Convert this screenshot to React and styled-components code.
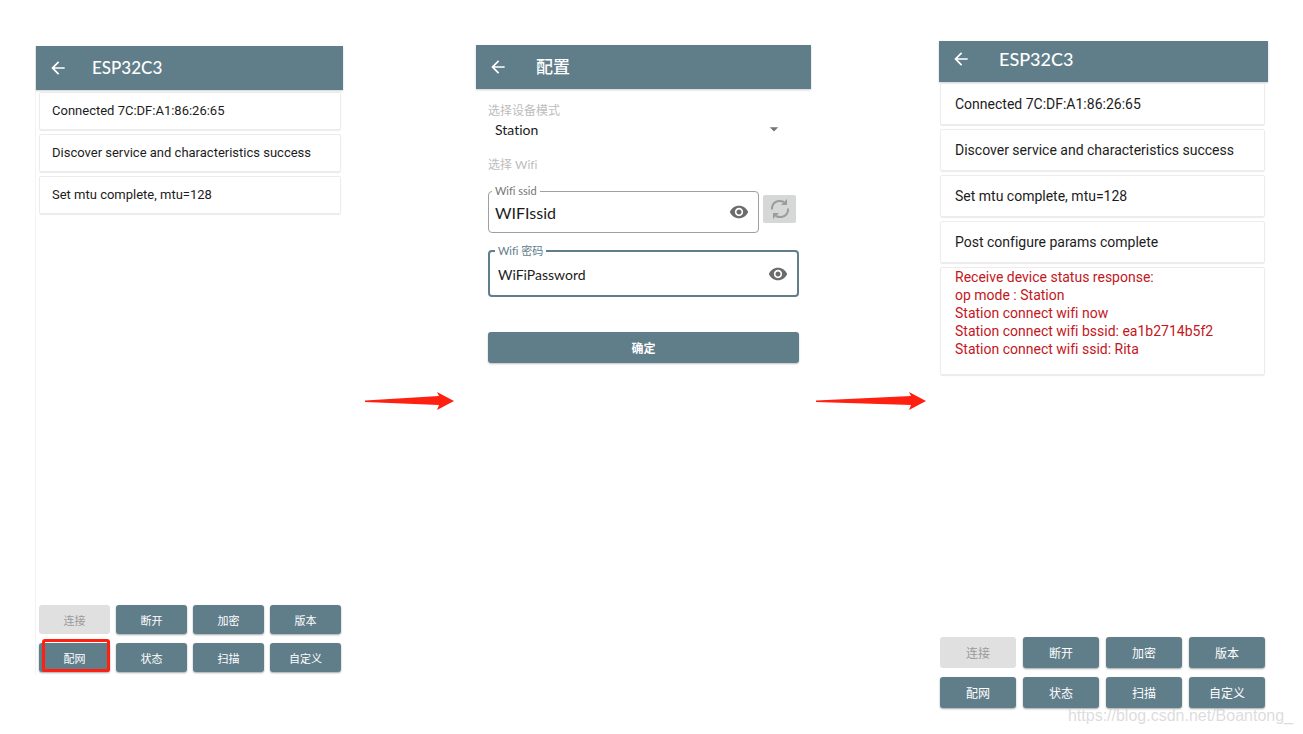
import React from "react";
import styled, { createGlobalStyle, css } from "styled-components";
import { MdArrowBack, MdArrowDropDown, MdVisibility } from "react-icons/md";

const slate = "#607d8a";
const red = "#ff2012";

const GlobalStyle = createGlobalStyle`
  * {
    box-sizing: border-box;
  }
  body {
    margin: 0;
    background: #fff;
    color: #1c1c1c;
    font-family: Lato, "Noto Sans CJK SC", sans-serif;
    font-variant-ligatures: none;
  }
  button, input, select {
    font-family: inherit;
    font-variant-ligatures: none;
    margin: 0;
  }
`;

const Page = styled.main`
  position: relative;
  min-height: 100vh;
  padding: 41px 35px 22px 36px;
  display: grid;
  grid-template-columns: 307fr 133fr 335fr 128fr 329fr;
`;

const Phone = styled.section`
  display: flex;
  flex-direction: column;
  min-width: 0;

  ${({ $size }) =>
    $size === "small" &&
    css`
      margin: 5px 0 37px;
      box-shadow: -1px 0 0 #f3f3f3;
    `}
  ${({ $size }) =>
    $size === "medium" &&
    css`
      margin-top: 4px;
    `}
`;

const AppBar = styled.header`
  display: flex;
  align-items: center;
  gap: ${({ $wide }) => ($wide ? "28px" : "24px")};
  height: ${({ $tall }) => ($tall ? "44px" : "41px")};
  padding: 0 12px ${({ $tall }) => ($tall ? "0" : "6px")};
  background: ${slate};
  color: #fff;
  box-shadow: 0 1px 2px rgba(0, 0, 0, 0.2);

  h1 {
    margin: 0;
    font-size: ${({ $tall }) => ($tall ? "17px" : "18px")};
    font-weight: 500;
    line-height: 24px;
  }
`;

const BackButton = styled.button`
  display: flex;
  padding: 0;
  border: 0;
  background: none;
  color: inherit;
  font-size: 20px;
`;

const Log = styled.ul`
  flex: 1;
  display: flex;
  flex-direction: column;
  gap: 4px;
  margin: 0;
  padding: ${({ $large }) => ($large ? "1px 3px 0 1px" : "2px 2px 0 3px")};
  list-style: none;
  font-family: Roboto, sans-serif;
  font-size: ${({ $large }) => ($large ? "14px" : "13px")};
  line-height: 18px;
`;

const Entry = styled.li`
  padding: ${({ $large }) => ($large ? "11px 14px" : "9px 12px")};
  border: 1px solid #ececec;
  border-radius: 2px;
  box-shadow: 0 1px 1px rgba(0, 0, 0, 0.08);
  white-space: pre-line;

  ${({ $alert }) =>
    $alert &&
    css`
      padding: 0 14px 16px;
      color: #c4161c;
    `}
`;

const Actions = styled.div`
  display: grid;
  grid-template-columns: repeat(4, 1fr);
  gap: 9px ${({ $large }) => ($large ? "7px" : "6px")};
  padding: ${({ $large }) => ($large ? "0 3px 4px 1px" : "0 2px 3px 3px")};
`;

const Action = styled.button`
  position: relative;
  height: ${({ $large }) => ($large ? "31px" : "29px")};
  padding: 0;
  border: 0;
  border-radius: 3px;
  background: ${slate};
  color: #fff;
  font-size: ${({ $large }) => ($large ? "12px" : "11px")};
  box-shadow: 0 1px 2px rgba(0, 0, 0, 0.35);

  &:disabled {
    background: #e0e0e0;
    color: #9a9a9a;
    box-shadow: none;
  }
`;

const Highlight = styled.span`
  position: absolute;
  inset: -4px 0 0 3px;
  border: 3px solid ${red};
  border-radius: 3px;
`;

const ArrowBox = styled.div`
  display: flex;
  align-items: center;
  justify-content: center;
  padding: 48px ${({ $long }) => ($long ? "8px" : "0")} 0 0;
`;

const Form = styled.form`
  display: flex;
  flex-direction: column;
  padding: 14px 12px 0;
`;

const Hint = styled.label`
  color: #bdbdbd;
  font-size: 12px;
  line-height: 16px;
`;

const SelectRow = styled.div`
  display: flex;
  align-items: center;
  margin-bottom: 18px;
  padding: 0 15px 0 7px;

  select {
    flex: 1;
    height: 20px;
    padding: 0;
    border: 0;
    background: none;
    appearance: none;
    color: #1c1c1c;
    font-size: 14px;
  }
  svg {
    color: #757575;
  }
`;

const WifiRow = styled.div`
  display: flex;
  align-items: center;
  gap: 4px;
  margin: 11px 3px 11px 0;
`;

const Field = styled.fieldset`
  flex: 1 1 auto;
  min-width: 0;
  height: ${({ $focused }) => ($focused ? "53px" : "49px")};
  margin: 0;
  padding: 0 ${({ $focused }) => ($focused ? "9px 0 5px" : "9px 0 3px")};
  border: ${({ $focused }) =>
    $focused ? `2px solid ${slate}` : "1px solid #a0a0a0"};
  border-radius: 4px;

  legend {
    padding: 0 3px;
    color: ${({ $focused }) => ($focused ? slate : "#757575")};
    font-size: 11px;
    line-height: 14px;
  }
`;

const FieldBody = styled.div`
  display: flex;
  align-items: center;
  height: ${({ $focused }) => ($focused ? "32px" : "28px")};
  padding-left: 3px;

  input {
    flex: 1;
    min-width: 0;
    padding: 0;
    border: 0;
    outline: 0;
    background: none;
    color: #1c1c1c;
    font-size: ${({ $focused }) => ($focused ? "14px" : "16px")};
  }
`;

const EyeButton = styled.button`
  display: flex;
  padding: 0;
  border: 0;
  background: none;
  color: #6b6b6b;
  font-size: 20px;
`;

const RefreshButton = styled.button`
  display: flex;
  align-items: center;
  justify-content: center;
  width: 33px;
  height: 28px;
  padding: 0;
  border: 0;
  border-radius: 2px;
  background: #d6d7d7;
`;

const Submit = styled.button`
  height: 31px;
  margin-top: 35px;
  border: 0;
  border-radius: 3px;
  background: ${slate};
  color: #fff;
  font-size: 12px;
  font-weight: 700;
  box-shadow: 0 1px 2px rgba(0, 0, 0, 0.25);
`;

const Watermark = styled.a`
  position: absolute;
  right: 10px;
  bottom: 8px;
  color: rgba(205, 205, 205, 0.7);
  font-family: "Liberation Sans", sans-serif;
  font-size: 16px;
  line-height: 20px;
  text-decoration: none;
`;

const actions = ["连接", "断开", "加密", "版本", "配网", "状态", "扫描", "自定义"];

const messages = [
  "Connected 7C:DF:A1:86:26:65",
  "Discover service and characteristics success",
  "Set mtu complete, mtu=128",
];

const statusText = `Receive device status response:
op mode : Station
Station connect wifi now
Station connect wifi bssid: ea1b2714b5f2
Station connect wifi ssid: Rita`;

function Header({ title, ...props }) {
  return (
    <AppBar {...props}>
      <BackButton type="button" aria-label="Back">
        <MdArrowBack />
      </BackButton>
      <h1>{title}</h1>
    </AppBar>
  );
}

function ActionGrid({ large, marked }) {
  return (
    <Actions $large={large}>
      {actions.map((name, i) => (
        <Action key={name} type="button" $large={large} disabled={i === 0}>
          {name}
          {name === marked && <Highlight />}
        </Action>
      ))}
    </Actions>
  );
}

function TextField({ id, label, value, focused }) {
  return (
    <Field $focused={focused}>
      <legend>
        <label htmlFor={id}>{label}</label>
      </legend>
      <FieldBody $focused={focused}>
        <input id={id} type="text" defaultValue={value} />
        <EyeButton type="button" aria-label="Show">
          <MdVisibility />
        </EyeButton>
      </FieldBody>
    </Field>
  );
}

function Arrow({ long }) {
  const w = long ? 110 : 89;
  return (
    <ArrowBox $long={long}>
      <svg width={w} height="18" viewBox={`0 0 ${w} 18`} fill={red}>
        <path
          d={`M0 8.6 L${w - 15} 4 L${w - 17} 0 L${w} 9 L${w - 17} 18 L${w - 15} 13 L0 10 Z`}
        />
      </svg>
    </ArrowBox>
  );
}

function RefreshIcon() {
  return (
    <svg width="20" height="22" viewBox="0 0 20 22" fill="none" stroke="#9c9c9c" strokeWidth="2">
      <path d="M2 11.5C1.5 5 7.5 1 14 4" />
      <path d="M18 10.5C18.5 17 12.5 21 6 18" />
      <path d="M17 1V7H11Z" fill="#9c9c9c" stroke="none" />
      <path d="M3 21V15H9Z" fill="#9c9c9c" stroke="none" />
    </svg>
  );
}

export default function App() {
  return (
    <>
      <GlobalStyle />
      <Page>
        <Phone $size="small">
          <Header title="ESP32C3" $tall />
          <Log>
            {messages.map((text) => (
              <Entry key={text}>{text}</Entry>
            ))}
          </Log>
          <ActionGrid marked="配网" />
        </Phone>

        <Arrow />

        <Phone $size="medium">
          <Header title="配置" $tall $wide />
          <Form>
            <Hint htmlFor="mode">选择设备模式</Hint>
            <SelectRow>
              <select id="mode" defaultValue="Station">
                <option>Station</option>
              </select>
              <MdArrowDropDown size={20} />
            </SelectRow>
            <Hint htmlFor="ssid">选择 Wifi</Hint>
            <WifiRow>
              <TextField id="ssid" label="Wifi ssid" value="WIFIssid" />
              <RefreshButton type="button" aria-label="Refresh">
                <RefreshIcon />
              </RefreshButton>
            </WifiRow>
            <TextField id="password" label="Wifi 密码" value="WiFiPassword" focused />
            <Submit type="button">确定</Submit>
          </Form>
        </Phone>

        <Arrow long />

        <Phone>
          <Header title="ESP32C3" $wide />
          <Log $large>
            {[...messages, "Post configure params complete"].map((text) => (
              <Entry key={text} $large>
                {text}
              </Entry>
            ))}
            <Entry $alert>{statusText}</Entry>
          </Log>
          <ActionGrid large />
        </Phone>

        <Watermark href="https://blog.csdn.net/Boantong_">
          https://blog.csdn.net/Boantong_
        </Watermark>
      </Page>
    </>
  );
}
